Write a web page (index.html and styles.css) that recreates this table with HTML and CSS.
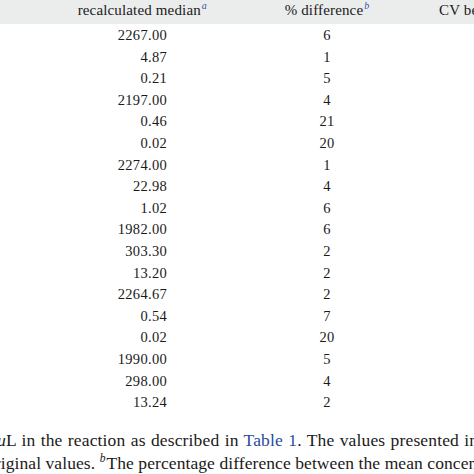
FILE: index.html
```html
<!DOCTYPE html>
<html>
<head>
<meta charset="utf-8">
<link rel="stylesheet" href="styles.css">
</head>
<body>
<div class="page">
  <div class="row head">
    <div class="c1">recalculated median<sup>a</sup></div>
    <div class="c2">% difference<sup>b</sup></div>
    <div class="c3">CV between</div>
  </div>
  <div class="body">
    <div class="row"><div class="c1">2267.00</div><div class="c2">6</div><div class="c3"></div></div>
    <div class="row"><div class="c1">4.87</div><div class="c2">1</div><div class="c3"></div></div>
    <div class="row"><div class="c1">0.21</div><div class="c2">5</div><div class="c3"></div></div>
    <div class="row"><div class="c1">2197.00</div><div class="c2">4</div><div class="c3"></div></div>
    <div class="row"><div class="c1">0.46</div><div class="c2">21</div><div class="c3"></div></div>
    <div class="row"><div class="c1">0.02</div><div class="c2">20</div><div class="c3"></div></div>
    <div class="row"><div class="c1">2274.00</div><div class="c2">1</div><div class="c3"></div></div>
    <div class="row"><div class="c1">22.98</div><div class="c2">4</div><div class="c3"></div></div>
    <div class="row"><div class="c1">1.02</div><div class="c2">6</div><div class="c3"></div></div>
    <div class="row"><div class="c1">1982.00</div><div class="c2">6</div><div class="c3"></div></div>
    <div class="row"><div class="c1">303.30</div><div class="c2">2</div><div class="c3"></div></div>
    <div class="row"><div class="c1">13.20</div><div class="c2">2</div><div class="c3"></div></div>
    <div class="row"><div class="c1">2264.67</div><div class="c2">2</div><div class="c3"></div></div>
    <div class="row"><div class="c1">0.54</div><div class="c2">7</div><div class="c3"></div></div>
    <div class="row"><div class="c1">0.02</div><div class="c2">20</div><div class="c3"></div></div>
    <div class="row"><div class="c1">1990.00</div><div class="c2">5</div><div class="c3"></div></div>
    <div class="row"><div class="c1">298.00</div><div class="c2">4</div><div class="c3"></div></div>
    <div class="row"><div class="c1">13.24</div><div class="c2">2</div><div class="c3"></div></div>
  </div>
  <div class="notes">
    <div class="line l1"><span class="mu">μ</span>L in the reaction as described in <span class="link">Table 1</span>. The values presented in</div>
    <div class="line l2">original values. <sup class="fn">b</sup>The percentage difference between the mean concentration</div>
  </div>
</div>
</body>
</html>
```
FILE: styles.css
```css
html, body {
  margin: 0;
  padding: 0;
  background: #ffffff;
}
body {
  width: 474px;
  height: 474px;
  overflow: hidden;
  font-family: "Liberation Serif", "DejaVu Serif", serif;
  color: #1a1a1a;
}
.page {
  width: 474px;
  overflow: hidden;
}
.row {
  display: flex;
  height: 21.6px;
  font-size: 14.5px;
  line-height: 21.6px;
  letter-spacing: 0.3px;
  white-space: nowrap;
}
.row.head {
  height: 24px;
  box-sizing: border-box;
  padding-bottom: 4px;
  line-height: 20px;
  background: #ebeded;
  font-size: 15px;
  letter-spacing: 0.15px;
}
.body {
  padding-top: 1px;
}
.c1 {
  width: 230px;
  flex: none;
  text-align: right;
  padding-right: 63px;
  box-sizing: border-box;
}
.head .c1 {
  padding-right: 23px;
}
.c2 {
  width: 194px;
  flex: none;
  text-align: center;
}
.c3 {
  flex: none;
  padding-left: 15px;
}
sup {
  font-size: 10px;
  line-height: 0;
  font-style: italic;
  color: #3a4fa8;
  vertical-align: 6px;
  margin-left: 1px;
}
.notes {
  padding-top: 15px;
  font-size: 17.5px;
  line-height: 23px;
  letter-spacing: 0.15px;
  white-space: nowrap;
}
.l1 {
  margin-left: -3px;
  word-spacing: 0.8px;
}
.l2 {
  margin-left: -14px;
  letter-spacing: 0.08px;
}
sup.fn {
  color: #1a1a1a;
  font-size: 11.5px;
  vertical-align: 7px;
  margin-left: 0;
  margin-right: 1px;
}
.mu {
  font-style: italic;
}
.link {
  color: #2b4aa0;
}
```
